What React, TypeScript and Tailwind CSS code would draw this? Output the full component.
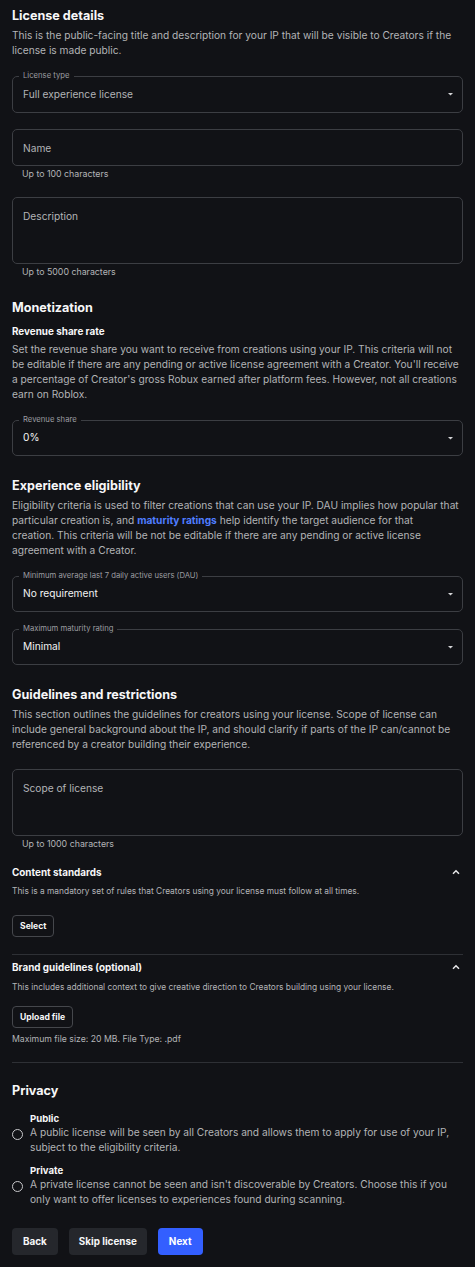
import type { ReactNode } from "react";

const font = { fontFamily: 'Inter, "Liberation Sans", Arial, sans-serif' };

function Caret() {
  return (
    <svg width="5" height="3" viewBox="0 0 5 3" className="shrink-0">
      <polygon points="0,0 5,0 2.5,2.6" fill="#d4d4d6" />
    </svg>
  );
}

function ChevronUp() {
  return (
    <svg width="8" height="6" viewBox="0 0 8 6" className="shrink-0">
      <path d="M1 4.8 L4 1.8 L7 4.8" stroke="#e8e8ea" strokeWidth="1.5" fill="none" />
    </svg>
  );
}

function SelectField({ label, value, muted, h = "h-[37px]" }: { label: string; value: string; muted?: boolean; h?: string }) {
  return (
    <div className={`relative ${h} rounded-[5px] border border-[#3c3e43] flex items-center pl-[10px] pr-[9px]`}>
      <span className="absolute -top-[6px] left-[6px] bg-[#111216] px-[4px] text-[7.7px] leading-[10px] text-[#9c9da1]">{label}</span>
      <span className={`flex-1 text-[10.2px] ${muted ? "text-[#b3b4b7]" : "text-[#f2f2f3]"}`}>{value}</span>
      <Caret />
    </div>
  );
}

function TextField({ placeholder, tall }: { placeholder: string; tall?: boolean }) {
  return (
    <div className={`rounded-[5px] border border-[#3c3e43] px-[10px] flex ${tall ? "h-[67px] items-start pt-[11px]" : "h-[37px] items-center"}`}>
      <span className="text-[10.2px] leading-[14px] text-[#b3b4b7]">{placeholder}</span>
    </div>
  );
}

function Helper({ children, className = "" }: { children: ReactNode; className?: string }) {
  return <p className={`pl-[10px] text-[8.8px] leading-[12px] text-[#b3b4b7] ${className}`}>{children}</p>;
}

function H2({ children, className = "" }: { children: ReactNode; className?: string }) {
  return <h2 className={`text-[12.6px] leading-[16px] font-bold text-[#f7f7f8] ${className}`}>{children}</h2>;
}

function H3({ children }: { children: ReactNode }) {
  return <h3 className="text-[9.9px] leading-[14px] font-bold text-[#f7f7f8]">{children}</h3>;
}

function Para({ children, className = "" }: { children: ReactNode; className?: string }) {
  return <p className={`text-[10.2px] leading-[15px] text-[#b3b4b7] ${className}`}>{children}</p>;
}

function Small({ children, className = "" }: { children: ReactNode; className?: string }) {
  return <p className={`text-[8.4px] leading-[12px] text-[#b3b4b7] ${className}`}>{children}</p>;
}

function OutlineButton({ children, className = "" }: { children: ReactNode; className?: string }) {
  return (
    <button className={`h-[22px] px-[7px] rounded-[4px] border border-[#45474c] text-[8.6px] font-bold text-[#f7f7f8] ${className}`}>
      {children}
    </button>
  );
}

function Radio({ title, text, className = "" }: { title: string; text: string; className?: string }) {
  return (
    <label className={`flex items-center gap-[7px] ${className}`}>
      <span className="w-[11px] h-[11px] rounded-full border-[1.5px] border-[#c8c8cb] shrink-0 mt-[2px]" />
      <span className="flex-1">
        <span className="block text-[9.6px] leading-[13px] font-bold text-[#f7f7f8]">{title}</span>
        <span className="block text-[10.2px] leading-[15px] text-[#b3b4b7]">{text}</span>
      </span>
    </label>
  );
}

export default function App() {
  return (
    <div className="min-h-[1267px] bg-[#111216] px-3 pt-[8px] pb-[11px]" style={font}>
      <H2>License details</H2>
      <Para className="mt-[4px]">
        This is the public-facing title and description for your IP that will be visible to Creators if the license is made public.
      </Para>
      <div className="mt-[18px]">
        <SelectField label="License type" value="Full experience license" muted />
      </div>
      <div className="mt-[16px]">
        <TextField placeholder="Name" />
      </div>
      <Helper className="mt-[2px]">Up to 100 characters</Helper>
      <div className="mt-[17px]">
        <TextField placeholder="Description" tall />
      </div>
      <Helper className="mt-[2px]">Up to 5000 characters</Helper>

      <H2 className="mt-[22px]">Monetization</H2>
      <div className="mt-[8px]">
        <H3>Revenue share rate</H3>
      </div>
      <Para className="mt-[4px]">
        Set the revenue share you want to receive from creations using your IP. This criteria will not be editable if there are any pending or active license agreement with a Creator. You'll receive a percentage of Creator's gross Robux earned after platform fees. However, not all creations earn on Roblox.
      </Para>
      <div className="mt-[18px]">
        <SelectField label="Revenue share" value="0%" h="h-[36px]" />
      </div>

      <H2 className="mt-[22px]">Experience eligibility</H2>
      <Para className="mt-[4px]">
        Eligibility criteria is used to filter creations that can use your IP. DAU implies how popular that particular creation is, and{" "}
        <span className="font-bold text-[#4f7dff]">maturity ratings</span> help identify the target audience for that
        <br />
        creation. This criteria will be not be editable if there are any pending or active license agreement with a Creator.
      </Para>
      <div className="mt-[18px]">
        <SelectField label="Minimum average last 7 daily active users (DAU)" value="No requirement" h="h-[36px]" />
      </div>
      <div className="mt-[17px]">
        <SelectField label="Maximum maturity rating" value="Minimal" h="h-[36px]" />
      </div>

      <H2 className="mt-[22px]">Guidelines and restrictions</H2>
      <Para className="mt-[4px]">
        This section outlines the guidelines for creators using your license. Scope of license can include general background about the IP, and should clarify if parts of the IP can/cannot be referenced by a creator building their experience.
      </Para>
      <div className="mt-[17px]">
        <TextField placeholder="Scope of license" tall />
      </div>
      <Helper className="mt-[2px]">Up to 1000 characters</Helper>

      <div className="mt-[15px] flex items-center justify-between pr-[3px]">
        <H3>Content standards</H3>
        <ChevronUp />
      </div>
      <Small className="mt-[6px]">
        This is a mandatory set of rules that Creators using your license must follow at all times.
      </Small>
      <OutlineButton className="mt-[18px]">Select</OutlineButton>
      <div className="mt-[17px] border-t border-[#2e3035]" />

      <div className="mt-[5px] flex items-center justify-between pr-[3px]">
        <H3>Brand guidelines (optional)</H3>
        <ChevronUp />
      </div>
      <Small className="mt-[7px]">
        This includes additional context to give creative direction to Creators building using your license.
      </Small>
      <OutlineButton className="mt-[13px]">Upload file</OutlineButton>
      <p className="mt-[5px] text-[8.7px] leading-[12px] text-[#b3b4b7]">Maximum file size: 20 MB. File Type: .pdf</p>
      <div className="mt-[17px] border-t border-[#2e3035]" />

      <H2 className="mt-[20px]">Privacy</H2>
      <Radio
        className="mt-[13px]"
        title="Public"
        text="A public license will be seen by all Creators and allows them to apply for use of your IP, subject to the eligibility criteria."
      />
      <Radio
        className="mt-[9px]"
        title="Private"
        text="A private license cannot be seen and isn't discoverable by Creators. Choose this if you only want to offer licenses to experiences found during scanning."
      />

      <div className="mt-[21px] flex gap-[11px]">
        <button className="h-[27px] px-[11px] rounded-[4px] bg-[#25272c] text-[9.9px] font-bold text-[#f7f7f8]">Back</button>
        <button className="h-[27px] px-[10px] rounded-[4px] bg-[#25272c] text-[9.9px] font-bold text-[#f7f7f8]">Skip license</button>
        <button className="h-[27px] px-[11px] rounded-[4px] bg-[#335fff] text-[9.9px] font-bold text-white">Next</button>
      </div>
    </div>
  );
}
